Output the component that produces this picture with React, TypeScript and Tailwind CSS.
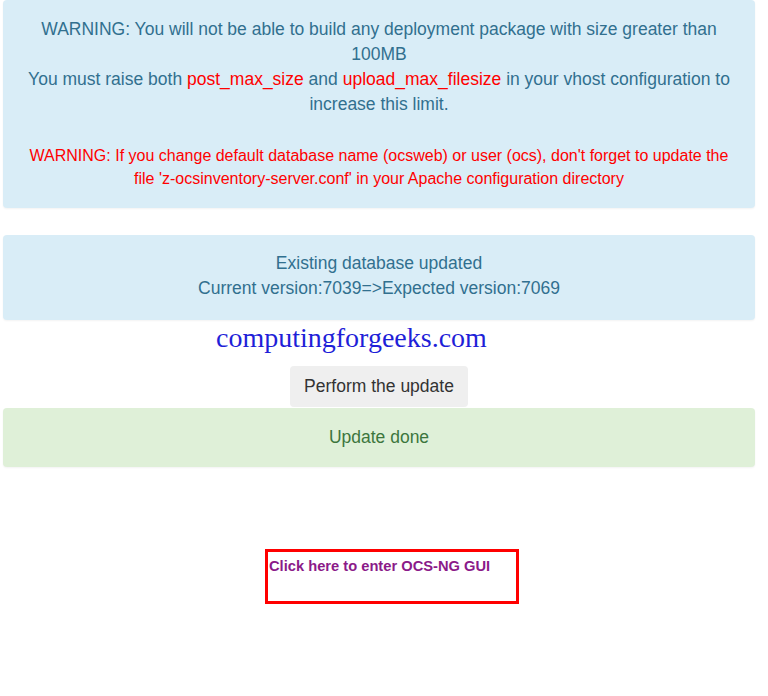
export default function App() {
  return (
    <div className="min-h-[696px] bg-white px-[3px] text-center font-['Liberation_Sans',Arial,sans-serif]">
      <div className="w-[752px] rounded bg-[#d9edf7] px-[21px] pb-[18px] pt-[17px] text-[17.5px] leading-[25px] text-[#31708f] shadow-[0_1px_2px_rgba(0,0,0,0.05)]">
        <p>WARNING: You will not be able to build any deployment package with size greater than 100MB</p>
        <p>
          You must raise both <span className="text-[#ff0000]">post_max_size</span> and{' '}
          <span className="text-[#ff0000]">upload_max_filesize</span> in your vhost configuration to increase this limit.
        </p>
        <p className="mt-[27px] text-[16px] leading-[23px] text-[#ff0000]">
          WARNING: If you change default database name (ocsweb) or user (ocs), don't forget to update the file
          'z-ocsinventory-server.conf' in your Apache configuration directory
        </p>
      </div>

      <div className="mt-[27px] w-[752px] rounded bg-[#d9edf7] pb-[19px] pt-[16px] text-[17.5px] leading-[25px] text-[#31708f] shadow-[0_1px_2px_rgba(0,0,0,0.05)]">
        <p>Existing database updated</p>
        <p>Current version:7039=&gt;Expected version:7069</p>
      </div>

      <div className="flex w-[752px] flex-col items-center">
        <p className="w-full pl-[213px] text-left font-['Liberation_Serif','Times_New_Roman',serif] text-[28px] leading-[36px] text-[#1f1fd8]">
          computingforgeeks.com
        </p>
        <button className="mt-[10px] h-[41px] w-[178px] rounded bg-[#efefef] text-[17.5px] leading-[23px] text-[#333333]">
          Perform the update
        </button>
      </div>

      <div className="mt-px w-[752px] rounded bg-[#dff0d8] py-[17px] text-[17.5px] leading-[25px] text-[#3c763d] shadow-[0_1px_2px_rgba(0,0,0,0.05)]">
        Update done
      </div>

      <div className="mt-[82px] flex w-[752px] justify-start pl-[262px]">
        <div className="h-[55px] w-[254px] border-[3px] border-[#ff0000] pl-[1px] pt-[2px] text-left">
          <a className="text-[14.7px] font-bold leading-[18px] text-[#8b1a89]">Click here to enter OCS-NG GUI</a>
        </div>
      </div>
    </div>
  );
}
